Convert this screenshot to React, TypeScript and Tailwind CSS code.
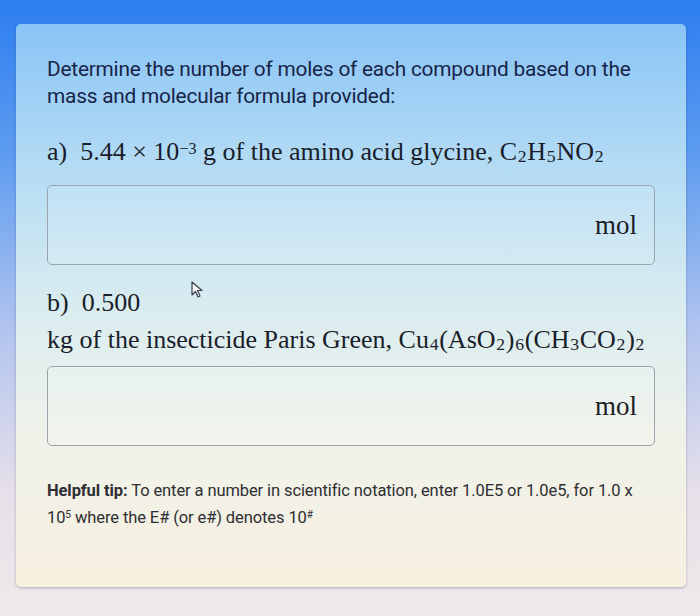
import React from 'react'

const serif = { fontFamily: '"Liberation Serif", "DejaVu Serif", serif' }

const Sub: React.FC<{ children: React.ReactNode }> = ({ children }) => (
  <sub className="text-[0.68em] leading-none relative top-[0.12em] align-baseline px-[0.04em]">{children}</sub>
)

const AnswerBox: React.FC = () => (
  <div className="h-[80px] w-[608px] rounded-[5px] border border-[#9aa5ad] bg-white/10 flex items-center justify-end pr-[17px]">
    <span className="text-[27px] leading-none text-[#1c1c24]" style={serif}>mol</span>
  </div>
)

const App: React.FC = () => {
  return (
    <div className="w-[700px] h-[616px] overflow-hidden bg-[linear-gradient(180deg,#2c7ef0_0%,#5d9cf0_25%,#b5c6ee_55%,#e6e0ea_80%,#efe9ea_100%)] pt-[24px] pl-[16px]">
      <div
        className="relative w-[670px] h-[563px] rounded-[5px] bg-[linear-gradient(180deg,#8ac4f6_0%,#b3dbf4_25%,#d9ecf0_50%,#eff2ea_72%,#f7f0e0_100%)] shadow-[0_1px_3px_rgba(60,60,90,0.35)] pl-[31px] pt-[32px]"
        style={{ fontFamily: 'Roboto, "Noto Sans", sans-serif' }}
      >
        <p className="text-[20.8px] leading-[27px] text-[#172448] w-[600px] tracking-[-0.2px]">
          Determine the number of moles of each compound based on the mass and molecular formula provided:
        </p>

        <p className="mt-[27px] text-[26px] leading-[30px] text-[#1a1d2a] whitespace-nowrap" style={serif}>
          a)&nbsp; 5.44 × 10<sup className="text-[0.62em] leading-none relative -top-[0.4em]">−3</sup> g of the amino acid glycine, C<Sub>2</Sub>H<Sub>5</Sub>NO<Sub>2</Sub>
        </p>

        <div className="mt-[18px]">
          <AnswerBox />
        </div>

        <div className="mt-[19px] text-[26px] leading-[37px] text-[#1a1d2a] whitespace-nowrap" style={serif}>
          <p>b)&nbsp; 0.500</p>
          <p>
            kg of the insecticide Paris Green, Cu<Sub>4</Sub>(AsO<Sub>2</Sub>)<Sub>6</Sub>(CH<Sub>3</Sub>CO<Sub>2</Sub>)<Sub>2</Sub>
          </p>
        </div>

        <div className="mt-[8px]">
          <AnswerBox />
        </div>

        <p className="mt-[31px] text-[16.5px] leading-[27px] text-[#2e2e33] w-[600px] tracking-[-0.1px]">
          <span className="font-bold">Helpful tip:</span> To enter a number in scientific notation, enter 1.0E5 or 1.0e5, for 1.0 x{' '}
          <span className="whitespace-nowrap">10<sup className="text-[0.62em] leading-none">5</sup></span> where the E# (or e#) denotes 10<sup className="text-[0.62em] leading-none">#</sup>
        </p>

        <svg className="absolute left-[175px] top-[257px]" width="14" height="18" viewBox="0 0 14 18">
          <path d="M1 1 L1 14 L4.5 10.5 L7 16 L9 15 L6.5 9.5 L11 9.5 Z" fill="#f4f6f8" stroke="#3a3f48" strokeWidth="1.2" strokeLinejoin="round" />
        </svg>
      </div>
    </div>
  )
}

export default App
